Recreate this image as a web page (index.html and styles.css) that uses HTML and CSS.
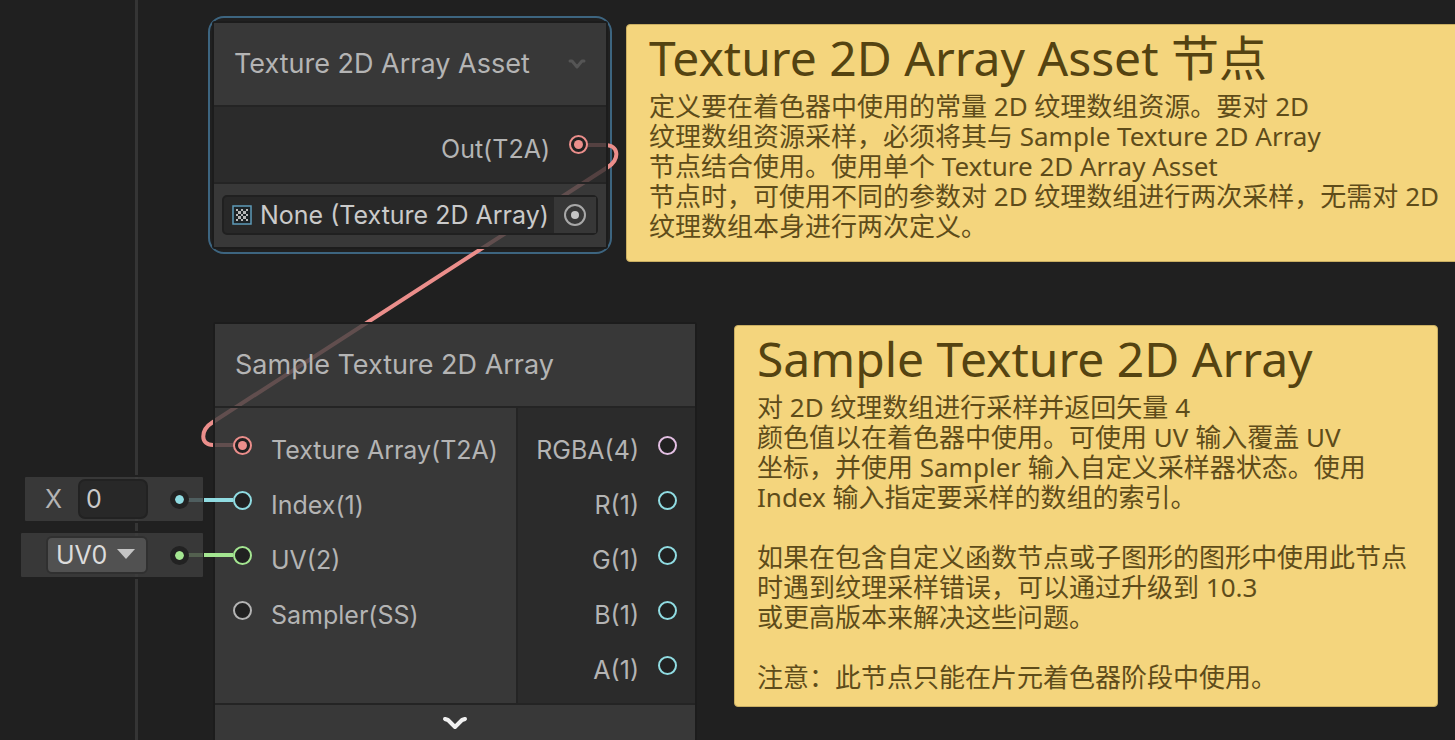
FILE: index.html
```
<!DOCTYPE html>
<html lang="zh-CN">
<head>
  <meta charset="UTF-8" />
  <title>Shader Graph</title>
  <meta name="viewport" content="width=device-width, initial-scale=1.0">
  <link rel="stylesheet" href="styles.css">
</head>
<body>
  <main class="graph">
    <div class="grid-line"></div>

    <!-- Edge between the two nodes, shows through the node bodies -->
    <svg class="edges" aria-hidden="true">
      <path class="edge texture" d="M577 145 H605 C619 145 620 159 608 167 L213 422 C200 430 200 445 213 445 H242" />
      <path class="edge float" d="M180 500 H242" />
      <path class="edge vector2" d="M180 555 H242" />
    </svg>

    <!-- Texture 2D Array Asset -->
    <section class="node asset-node selected">
      <header class="node-header">
        <h2>Texture 2D Array Asset</h2>
        <svg class="collapse" viewBox="0 0 18 14" aria-hidden="true"><path d="M2 4 L4 4 L9 10 L14 4 L16 4" /></svg>
      </header>
      <div class="ports outputs">
        <div class="port-row"><span class="label">Out(T2A)</span><span class="port texture connected"></span></div>
      </div>
      <div class="controls">
        <div class="object-field">
          <svg class="texture-icon" viewBox="0 0 20 20" aria-hidden="true">
            <rect x="1" y="1" width="18" height="18" fill="#1d2326" stroke="#5d9ab8" stroke-width="1.5" />
            <path fill="#b8b8b8" d="M4 4h2v2h-2zM14 4h2v2h-2zM9 4h2v2h-2zM6 6h3v3h-3zM11 6h3v3h-3zM4 9h2v2h-2zM9 9h2v2h-2zM14 9h2v2h-2zM6 11h3v3h-3zM11 11h3v3h-3zM4 14h2v2h-2zM9 14h2v2h-2zM14 14h2v2h-2z" />
          </svg>
          <span class="object-name">None (Texture 2D Array)</span>
          <button class="picker" type="button" aria-label="Select texture">
            <svg viewBox="0 0 24 24" aria-hidden="true"><circle cx="12" cy="12" r="10" /><circle class="dot" cx="12" cy="12" r="4" /></svg>
          </button>
        </div>
      </div>
    </section>

    <!-- Sample Texture 2D Array -->
    <section class="node sample-node">
      <header class="node-header">
        <h2>Sample Texture 2D Array</h2>
      </header>
      <div class="port-columns">
        <div class="ports inputs">
          <div class="port-row"><span class="port texture connected"></span><span class="label">Texture Array(T2A)</span></div>
          <div class="port-row"><span class="port float"></span><span class="label">Index(1)</span></div>
          <div class="port-row"><span class="port vector2"></span><span class="label">UV(2)</span></div>
          <div class="port-row"><span class="port sampler"></span><span class="label">Sampler(SS)</span></div>
        </div>
        <div class="ports outputs">
          <div class="port-row"><span class="label">RGBA(4)</span><span class="port vector4"></span></div>
          <div class="port-row"><span class="label">R(1)</span><span class="port float"></span></div>
          <div class="port-row"><span class="label">G(1)</span><span class="port float"></span></div>
          <div class="port-row"><span class="label">B(1)</span><span class="port float"></span></div>
          <div class="port-row"><span class="label">A(1)</span><span class="port float"></span></div>
        </div>
      </div>
      <button class="expand" type="button" aria-label="Expand preview">
        <svg viewBox="0 0 26 18" aria-hidden="true"><path d="M3 5 L6 6 L13 13 L20 6 L23 5" /></svg>
      </button>
    </section>

    <!-- Default values of the unconnected inputs -->
    <div class="slot index-slot">
      <label for="index">X</label>
      <input type="text" id="index" value="0">
      <span class="plug float"></span>
    </div>
    <div class="slot uv-slot">
      <div class="dropdown">
        <select id="uv" aria-label="UV channel">
          <option>UV0</option>
          <option>UV1</option>
          <option>UV2</option>
          <option>UV3</option>
        </select>
        <svg class="arrow" viewBox="0 0 18 10" aria-hidden="true"><path d="M0 0 H18 L9 10 Z" /></svg>
      </div>
      <span class="plug vector2"></span>
    </div>

    <svg class="edges" aria-hidden="true">
      <path class="edge float" d="M204 500 H233" />
      <path class="edge vector2" d="M204 555 H233" />
    </svg>

    <!-- Sticky notes -->
    <article class="note asset-note">
      <h1>Texture 2D Array Asset 节点</h1>
      <p>定义要在着色器中使用的常量 2D 纹理数组资源。要对 2D<br>
        纹理数组资源采样，必须将其与 Sample Texture 2D Array<br>
        节点结合使用。使用单个 Texture 2D Array Asset<br>
        节点时，可使用不同的参数对 2D 纹理数组进行两次采样，无需对 2D<br>
        纹理数组本身进行两次定义。</p>
    </article>
    <article class="note sample-note">
      <h1>Sample Texture 2D Array</h1>
      <p>对 2D 纹理数组进行采样并返回矢量 4<br>
        颜色值以在着色器中使用。可使用 UV 输入覆盖 UV<br>
        坐标，并使用 Sampler 输入自定义采样器状态。使用<br>
        Index 输入指定要采样的数组的索引。</p>
      <p>如果在包含自定义函数节点或子图形的图形中使用此节点<br>
        时遇到纹理采样错误，可以通过升级到 10.3<br>
        或更高版本来解决这些问题。</p>
      <p>注意：此节点只能在片元着色器阶段中使用。</p>
    </article>
  </main>
</body>
</html>
```
FILE: styles.css
```
* {
  box-sizing: border-box;
}
body {
  margin: 0;
  background: #202020;
  color: #b4b4b4;
  font-family: Inter, "Noto Sans CJK SC", sans-serif;
  font-size: 25px;
}
h1, h2, p {
  margin: 0;
  font-weight: 400;
}
button, input, select {
  font: inherit;
  color: inherit;
  margin: 0;
  padding: 0;
  border: none;
}

/* Canvas */
.graph {
  position: relative;
  isolation: isolate;
  height: 100vh;
  overflow: hidden;
}
.grid-line {
  position: absolute;
  z-index: -2;
  top: 0;
  bottom: 0;
  left: 135px;
  width: 3px;
  background: #353535;
}
.edges {
  position: absolute;
  top: 0;
  left: 0;
  width: 100%;
  height: 100%;
  pointer-events: none;
}
.edge {
  fill: none;
  stroke: currentColor;
  stroke-width: 4;
}
.texture { color: #eb8e8b; }
.float { color: #90dce2; }
.vector2 { color: #a4e691; }
.vector4 { color: #e3bfe3; }
.sampler { color: #b4b4b4; }

/* Nodes */
.node {
  position: absolute;
  border: 2px solid #1c1c1c;
  border-radius: 3px;
}
.asset-node {
  left: 212px;
  top: 21px;
  width: 396px;
}
.sample-node {
  left: 213px;
  top: 322px;
  width: 484px;
}
.selected::before {
  content: "";
  position: absolute;
  z-index: -1;
  inset: -7px -6px;
  border: 2px solid #3d6580;
  border-radius: 16px;
}
.node-header {
  display: flex;
  align-items: center;
  justify-content: space-between;
  height: 84px;
  padding: 0 20px;
  background: rgba(63, 63, 63, 0.8);
  border-bottom: 2px solid #242424;
}
.node-header h2 {
  font-size: 27px;
  line-height: 32px;
}
.collapse {
  width: 18px;
  height: 14px;
  fill: none;
  stroke: #555;
  stroke-width: 3;
  stroke-linecap: round;
  stroke-linejoin: round;
}
.port-columns {
  display: flex;
}
.ports {
  padding: 10px 18px;
}
.inputs {
  flex: 1;
  background: rgba(63, 63, 63, 0.8);
}
.outputs {
  background: rgba(46, 46, 46, 0.8);
}
.sample-node .outputs {
  width: 180px;
  border-left: 2px solid #242424;
}
.port-row {
  display: flex;
  align-items: center;
  gap: 19px;
  height: 55px;
}
.outputs .port-row {
  justify-content: flex-end;
}
.label {
  padding-top: 8px;
  line-height: 32px;
  white-space: nowrap;
}
.port {
  flex: none;
  display: flex;
  align-items: center;
  justify-content: center;
  width: 19px;
  height: 19px;
  border: 2px solid currentColor;
  border-radius: 50%;
  background: #212121;
}
.connected::after {
  content: "";
  width: 9px;
  height: 9px;
  border-radius: 50%;
  background: currentColor;
}
.controls {
  padding: 11px 8px 12px;
  background: rgba(63, 63, 63, 0.8);
  border-top: 2px solid #242424;
}
.object-field {
  display: flex;
  align-items: center;
  height: 40px;
  padding-left: 8px;
  border: 2px solid #202020;
  border-radius: 5px;
  background: #282828;
  color: #cacaca;
}
.texture-icon {
  flex: none;
  width: 20px;
  height: 20px;
  margin-right: 8px;
}
.object-name {
  flex: 1;
  white-space: nowrap;
}
.picker {
  flex: none;
  display: flex;
  align-items: center;
  justify-content: center;
  width: 42px;
  height: 36px;
  background: #373737;
}
.picker svg {
  width: 24px;
  height: 24px;
  fill: none;
  stroke: #a8a8a8;
  stroke-width: 2;
}
.picker .dot {
  fill: #c4c4c4;
  stroke: none;
}
.expand {
  display: flex;
  align-items: center;
  justify-content: center;
  width: 100%;
  height: 38px;
  background: rgba(63, 63, 63, 0.8);
  border-top: 2px solid #242424;
}
.expand svg {
  width: 26px;
  height: 18px;
  fill: none;
  stroke: #f0f0f0;
  stroke-width: 4;
  stroke-linecap: round;
  stroke-linejoin: round;
}

/* Default value slots */
.slot {
  position: absolute;
  display: flex;
  align-items: center;
  justify-content: flex-end;
  height: 48px;
  padding-right: 14px;
  border: 2px solid #202020;
  border-radius: 3px;
  background: rgba(63, 63, 63, 0.8);
}
.index-slot {
  left: 23px;
  top: 475px;
  width: 182px;
}
.uv-slot {
  left: 19px;
  top: 531px;
  width: 186px;
}
.slot label {
  margin-right: 16px;
}
.slot input {
  width: 70px;
  height: 40px;
  padding: 0 6px;
  border: 2px solid #222;
  border-radius: 7px;
  background: #282828;
  color: #cacaca;
}
.dropdown {
  position: relative;
}
.dropdown select {
  display: block;
  appearance: none;
  width: 102px;
  height: 38px;
  padding: 0 8px;
  border: 2px solid #303030;
  border-radius: 6px;
  background: #515151;
  color: #dcdcdc;
}
.arrow {
  position: absolute;
  right: 13px;
  top: 13px;
  width: 18px;
  height: 10px;
  fill: #c4c4c4;
  pointer-events: none;
}
.plug {
  width: 19px;
  height: 19px;
  margin-left: 22px;
  border: 5px solid #222;
  border-radius: 50%;
  background: currentColor;
  background-clip: padding-box;
}

/* Sticky notes */
.note {
  position: absolute;
  padding: 4px 22px 14px;
  border: 1px solid #c9ae62;
  border-radius: 4px;
  background: #f4d57d;
  color: #5e4c1a;
  font-family: "Noto Sans", "Noto Sans CJK SC", sans-serif;
  font-size: 26px;
  line-height: 30px;
  white-space: nowrap;
}
.note h1 {
  margin-bottom: 4px;
  color: #544311;
  font-size: 48px;
  line-height: 58px;
}
.note p + p {
  margin-top: 30px;
}
.asset-note {
  left: 626px;
  top: 24px;
  width: 860px;
  min-height: 238px;
}
.sample-note {
  left: 734px;
  top: 325px;
  width: 704px;
}
```
